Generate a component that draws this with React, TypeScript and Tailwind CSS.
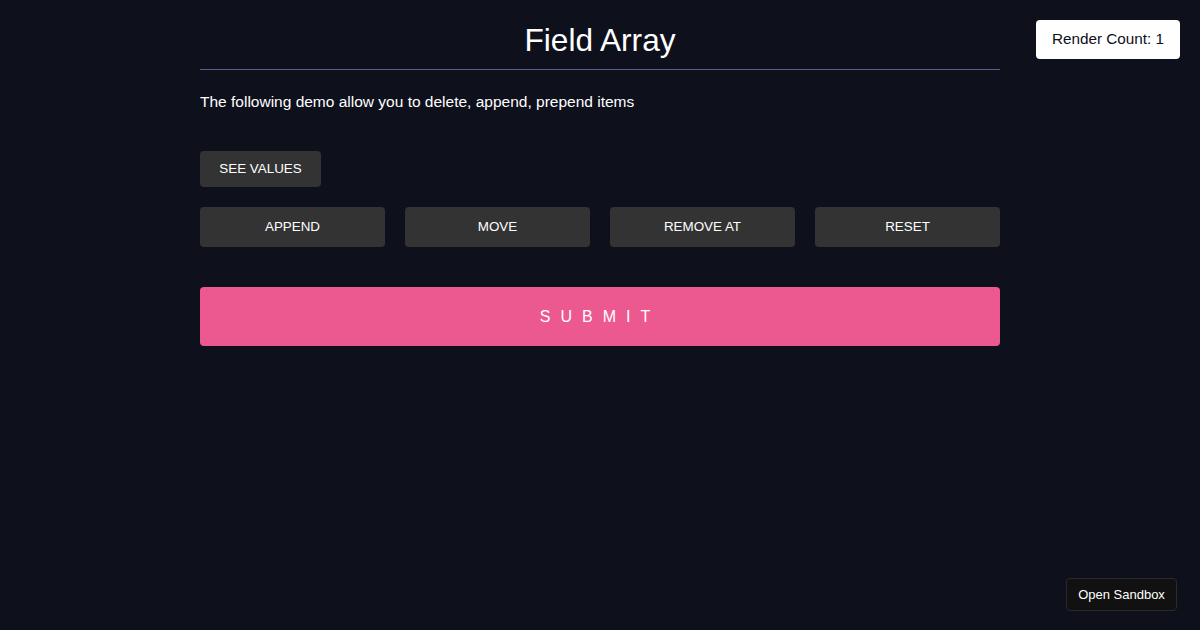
export default function App() {
  const actions = ['APPEND', 'MOVE', 'REMOVE AT', 'RESET'];
  return (
    <div className="relative h-[630px] w-full bg-[#0e101c] text-white font-['Liberation_Sans',Arial,sans-serif]">
      <button className="absolute right-5 top-5 h-[39px] w-[144px] rounded-[4px] bg-white text-[15.3px] text-[#0e101c]">
        Render Count: 1
      </button>

      <div className="mx-auto w-[800px] pt-[19px]">
        <h1 className="border-b border-[#516391] pb-[8px] text-center text-[31.6px] leading-[42px] font-normal">Field Array</h1>
        <p className="mt-[21px] text-[15.5px] leading-[22px]">The following demo allow you to delete, append, prepend items</p>

        <button className="mt-[38px] h-[36px] w-[121px] rounded-[4px] bg-[#333333] text-[13.4px] text-white">SEE VALUES</button>

        <div className="mt-5 grid grid-cols-4 gap-5">
          {actions.map((a) => (
            <button key={a} className="h-10 rounded-[4px] bg-[#333333] text-[13.4px] text-white">
              {a}
            </button>
          ))}
        </div>

        <button className="mt-10 h-[59px] w-full rounded-[4px] bg-[#ec5990] text-base tracking-[10px] text-white">
          SUBMIT
        </button>
      </div>

      <button className="absolute bottom-[19px] right-[23px] h-[33px] w-[111px] rounded-[4px] border border-[#2a2a2e] bg-[#111111] text-[13px] text-white">
        Open Sandbox
      </button>
    </div>
  );
}
